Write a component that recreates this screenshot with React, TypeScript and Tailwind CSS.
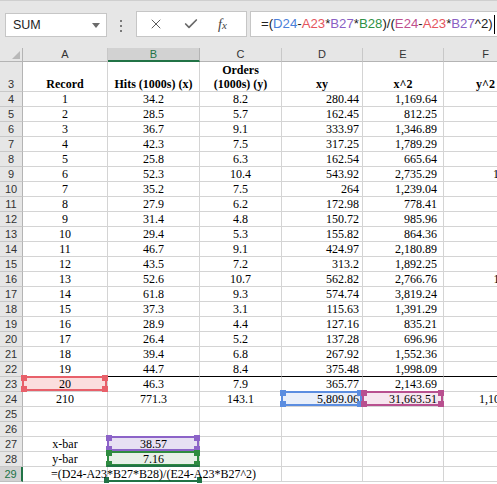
import { X, Check } from 'lucide-react'

type Row = [string, string, string, string, string, string]

const data: Row[] = [
  ['1', '34.2', '8.2', '280.44', '1,169.64', ''],
  ['2', '28.5', '5.7', '162.45', '812.25', ''],
  ['3', '36.7', '9.1', '333.97', '1,346.89', ''],
  ['4', '42.3', '7.5', '317.25', '1,789.29', ''],
  ['5', '25.8', '6.3', '162.54', '665.64', ''],
  ['6', '52.3', '10.4', '543.92', '2,735.29', '108.16'],
  ['7', '35.2', '7.5', '264', '1,239.04', ''],
  ['8', '27.9', '6.2', '172.98', '778.41', ''],
  ['9', '31.4', '4.8', '150.72', '985.96', ''],
  ['10', '29.4', '5.3', '155.82', '864.36', ''],
  ['11', '46.7', '9.1', '424.97', '2,180.89', ''],
  ['12', '43.5', '7.2', '313.2', '1,892.25', ''],
  ['13', '52.6', '10.7', '562.82', '2,766.76', '114.49'],
  ['14', '61.8', '9.3', '574.74', '3,819.24', ''],
  ['15', '37.3', '3.1', '115.63', '1,391.29', ''],
  ['16', '28.9', '4.4', '127.16', '835.21', ''],
  ['17', '26.4', '5.2', '137.28', '696.96', ''],
  ['18', '39.4', '6.8', '267.92', '1,552.36', ''],
  ['19', '44.7', '8.4', '375.48', '1,998.09', ''],
  ['20', '46.3', '7.9', '365.77', '2,143.69', ''],
]

const grid = 'border-r border-b border-[#d4d4d4]'
const cell = `${grid} flex items-end leading-[14px] whitespace-nowrap text-[12px] text-black`

function RowHead({ n, active }: { n: number; active?: boolean }) {
  return active ? (
    <div className="flex items-end justify-center border-b border-r-2 border-b-[#bfbfbf] border-r-[#217346] bg-[#d2d2d2] font-['Liberation_Sans',sans-serif] text-[11px] leading-[14px] text-[#217346]">
      {n}
    </div>
  ) : (
    <div className="flex items-end justify-center border-b border-r border-b-[#c8c8c8] border-r-[#b4b4b4] bg-[#e6e6e6] font-['Liberation_Sans',sans-serif] text-[11px] leading-[14px] text-[#333]">
      {n}
    </div>
  )
}

function Handles({ color }: { color: string }) {
  return (
    <>
      <span className={`absolute -left-[3px] -top-[3px] h-[6px] w-[6px] ${color}`} />
      <span className={`absolute -right-[3px] -top-[3px] h-[6px] w-[6px] ${color}`} />
      <span className={`absolute -left-[3px] -bottom-[3px] h-[6px] w-[6px] ${color}`} />
      <span className={`absolute -right-[3px] -bottom-[3px] h-[6px] w-[6px] ${color}`} />
    </>
  )
}

function RefBox({ border, fill }: { border: string; fill: string }) {
  return (
    <div className={`pointer-events-none absolute -left-[1px] -top-[1px] right-0 bottom-0 z-10 border-2 ${border}`}>
      <Handles color={fill} />
    </div>
  )
}

function ColHead({ label, active }: { label: string; active?: boolean }) {
  return active ? (
    <div className="flex items-center justify-center border-r border-b-2 border-r-[#b4b4b4] border-b-[#217346] bg-[#d2d2d2] font-['Liberation_Sans',sans-serif] text-[11px] text-[#217346]">
      {label}
    </div>
  ) : (
    <div className="flex items-center justify-center border-r border-b border-r-[#c8c8c8] border-b-[#b4b4b4] bg-[#e6e6e6] font-['Liberation_Sans',sans-serif] text-[11px] text-[#333]">
      {label}
    </div>
  )
}

export default function App() {
  return (
    <div className="h-[484px] w-[497px] overflow-hidden bg-white font-['Liberation_Serif',serif]">
      {/* formula bar */}
      <div className="flex h-[48px] items-start border-t border-[#cfcfcf] bg-[#e6e6e6] font-['Liberation_Sans',sans-serif]">
        <div className="ml-[5px] mt-[12px] flex h-[24px] w-[102px] shrink-0 items-center justify-between border border-[#c6c6c6] bg-white pl-[7px] pr-[6px]">
          <span className="text-[12.5px] text-[#222]">SUM</span>
          <svg width="8" height="5" viewBox="0 0 8 5">
            <path d="M0 0h8L4 5z" fill="#6b6b6b" />
          </svg>
        </div>
        <div className="ml-[13px] mt-[19px] flex shrink-0 flex-col gap-[3px]">
          <span className="h-[2px] w-[2px] bg-[#7a7a7a]" />
          <span className="h-[2px] w-[2px] bg-[#7a7a7a]" />
          <span className="h-[2px] w-[2px] bg-[#7a7a7a]" />
        </div>
        <div className="ml-[14px] mt-[10px] flex h-[26px] w-[111px] shrink-0 items-center border border-[#c6c6c6] bg-white">
          <X size={16} strokeWidth={1.5} className="ml-[11px] text-[#5a5a5a]" />
          <Check size={16} strokeWidth={2.6} className="ml-[19px] text-[#6a6a6a]" />
          <span className="ml-[19px] font-['Liberation_Serif',serif] text-[14px] italic text-[#444]">
            f<span className="text-[11px]">x</span>
          </span>
        </div>
        <div className="ml-[3px] mt-[10px] flex h-[26px] min-w-0 flex-1 items-center overflow-hidden border border-r-0 border-[#c6c6c6] bg-white pl-[10px] text-[13.2px] text-[#222]">
          <span className="whitespace-nowrap">
            =(<span className="text-[#4a7fd9]">D24</span>-<span className="text-[#e5555d]">A23</span>*
            <span className="text-[#8a5fc4]">B27</span>*<span className="text-[#2f9145]">B28</span>)/(
            <span className="text-[#c0508f]">E24</span>-<span className="text-[#e5555d]">A23</span>*
            <span className="text-[#8a5fc4]">B27</span>^2)
          </span>
          <span className="ml-[1px] h-[19px] w-[1px] shrink-0 bg-black" />
        </div>
      </div>

      {/* sheet */}
      <div className="grid grid-cols-[23px_85px_92px_82px_81px_81px_84px] grid-rows-[14px_30px_repeat(26,15px)]">
        <div className="relative border-r border-b border-r-[#b4b4b4] border-b-[#b4b4b4] bg-[#e6e6e6]">
          <svg width="8" height="8" viewBox="0 0 8 8" className="absolute bottom-[2px] right-[2px]">
            <path d="M8 0v8H0z" fill="#b8b8b8" />
          </svg>
        </div>
        <ColHead label="A" />
        <ColHead label="B" active />
        <ColHead label="C" />
        <ColHead label="D" />
        <ColHead label="E" />
        <ColHead label="F" />

        {/* row 3 */}
        <RowHead n={3} />
        <div className={`${cell} justify-center font-bold`}>Record</div>
        <div className={`${cell} justify-center font-bold`}>Hits (1000s) (x)</div>
        <div className={`${grid} flex flex-col items-center justify-end text-[12px] font-bold leading-[14px]`}>
          <span>Orders</span>
          <span>(1000s) (y)</span>
        </div>
        <div className={`${cell} justify-center font-bold`}>xy</div>
        <div className={`${cell} justify-center font-bold`}>x^2</div>
        <div className={`${cell} justify-center font-bold`}>y^2</div>

        {data.map((r, i) => {
          const last = i === data.length - 1
          const bottom = i === data.length - 2 ? 'border-b-black' : ''
          return [
            <RowHead key={`h${i}`} n={i + 4} />,
            last ? (
              <div key={`a${i}`} className={`${cell} ${bottom} relative justify-center bg-[#fbdede]`}>
                {r[0]}
                <RefBox border="border-[#e8606a]" fill="bg-[#e8606a]" />
              </div>
            ) : (
              <div key={`a${i}`} className={`${cell} ${bottom} justify-center`}>{r[0]}</div>
            ),
            <div key={`b${i}`} className={`${cell} ${bottom} justify-center`}>{r[1]}</div>,
            <div key={`c${i}`} className={`${cell} ${bottom} justify-center`}>{r[2]}</div>,
            <div key={`d${i}`} className={`${cell} ${bottom} justify-end pr-[3px]`}>{r[3]}</div>,
            <div key={`e${i}`} className={`${cell} ${bottom} justify-end pr-[6px]`}>{r[4]}</div>,
            <div key={`f${i}`} className={`${cell} ${bottom} justify-end pr-[1px]`}>{r[5]}</div>,
          ]
        })}

        {/* row 24 totals */}
        <RowHead n={24} />
        <div className={`${cell} justify-center`}>210</div>
        <div className={`${cell} justify-center`}>771.3</div>
        <div className={`${cell} justify-center`}>143.1</div>
        <div className={`${cell} relative justify-end bg-[#e9effa] pr-[3px]`}>
          5,809.06
          <RefBox border="border-[#5b8de0]" fill="bg-[#5b8de0]" />
        </div>
        <div className={`${cell} relative justify-end bg-[#f6e6ef] pr-[6px]`}>
          31,663.51
          <RefBox border="border-[#b8508f]" fill="bg-[#b8508f]" />
        </div>
        <div className={`${cell} justify-end pr-[6px]`}>1,103.31</div>

        {/* rows 25-26 */}
        {[25, 26].map(n => [
          <RowHead key={`h${n}`} n={n} />,
          <div key={`a${n}`} className={cell} />,
          <div key={`b${n}`} className={cell} />,
          <div key={`c${n}`} className={cell} />,
          <div key={`d${n}`} className={cell} />,
          <div key={`e${n}`} className={cell} />,
          <div key={`f${n}`} className={cell} />,
        ])}

        {/* row 27 */}
        <RowHead n={27} />
        <div className={`${cell} justify-center`}>x-bar</div>
        <div className={`${cell} relative justify-center bg-[#e7e0f3]`}>
          38.57
          <RefBox border="border-[#8c63c8]" fill="bg-[#8c63c8]" />
        </div>
        <div className={cell} />
        <div className={cell} />
        <div className={cell} />
        <div className={cell} />

        {/* row 28 */}
        <RowHead n={28} />
        <div className={`${cell} justify-center`}>y-bar</div>
        <div className={`${cell} relative justify-center bg-[#e7f0e8]`}>
          7.16
          <RefBox border="border-[#2e8b40]" fill="bg-[#2e8b40]" />
        </div>
        <div className={cell} />
        <div className={cell} />
        <div className={cell} />
        <div className={cell} />

        {/* row 29 - cell being edited */}
        <RowHead n={29} active />
        <div className={cell} />
        <div className={`${cell} relative justify-center text-[11.4px]`}>
          <span className="relative z-20">=(D24-A23*B27*B28)/(E24-A23*B27^2)</span>
          <div className="pointer-events-none absolute -left-[1px] -top-[2px] right-0 -bottom-[1px] z-10 border-y-2 border-[#217346]">
            <span className="absolute -left-[3px] -bottom-[3px] h-[6px] w-[5px] bg-[#217346]" />
            <span className="absolute -right-[3px] -bottom-[3px] h-[6px] w-[5px] bg-[#217346]" />
          </div>
        </div>
        <div className={cell} />
        <div className={cell} />
        <div className={cell} />
        <div className={cell} />
      </div>
    </div>
  )
}
